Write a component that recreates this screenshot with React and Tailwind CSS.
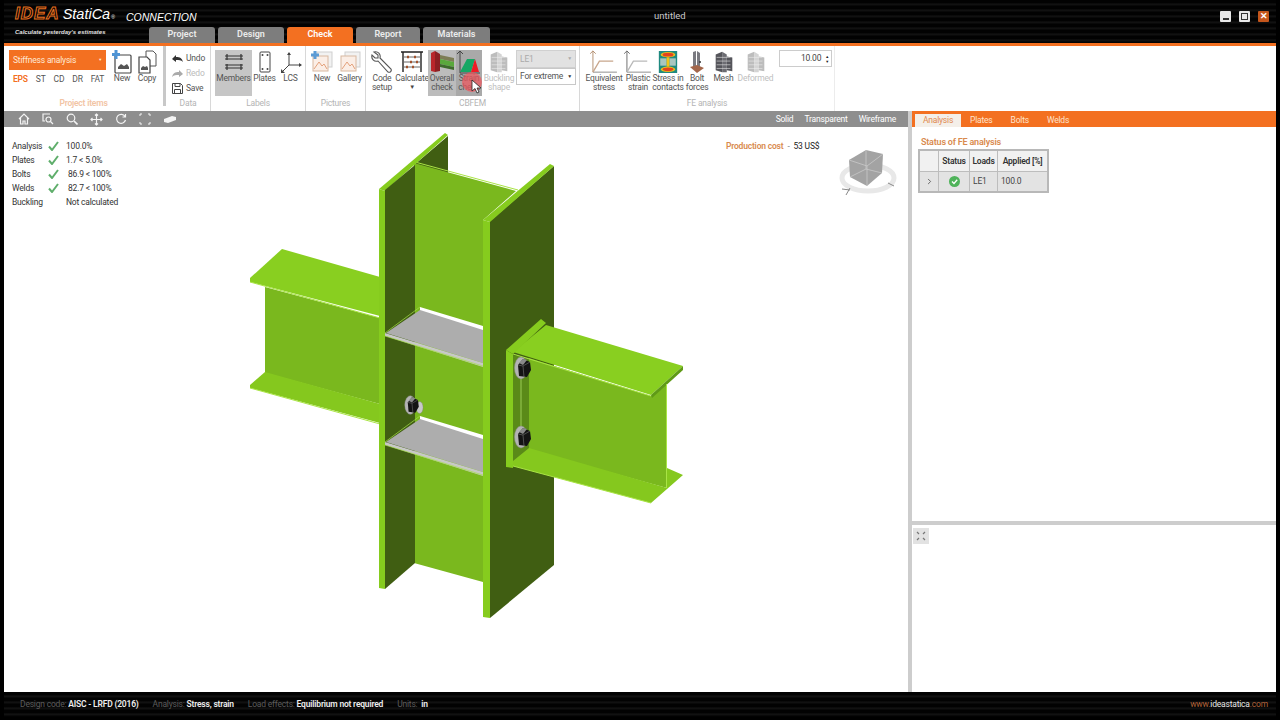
import React from 'react';
import { ChevronRight } from 'lucide-react';

const streaks = 'bg-[repeating-linear-gradient(180deg,#020202_0px,#020202_3px,#151515_4px,#050505_6px)]';

function Tab({ label, width, active }) {
  return (
    <div className={`h-[16px] rounded-t-[3px] flex items-center justify-center text-[9px] font-semibold ${width} ${active ? 'bg-[#f37021] text-white' : 'bg-[#7d7d7d] text-[#ececec]'}`}>
      {label}
    </div>
  );
}

function WindowButtons() {
  return (
    <div className="flex items-center gap-[8px] pr-[7px] pt-[1px]">
      <div className="w-[11px] h-[11px] rounded-[1px] bg-[#e8e8e8] flex items-end justify-center pb-[2px]">
        <div className="w-[6px] h-[2px] bg-[#333]" />
      </div>
      <div className="w-[11px] h-[11px] rounded-[1px] bg-[#e8e8e8] flex items-center justify-center">
        <div className="w-[7px] h-[7px] border border-[#333]" />
      </div>
      <div className="w-[11px] h-[11px] rounded-[1px] bg-[#c4561c] flex items-center justify-center text-[9px] leading-none font-bold text-white">✕</div>
    </div>
  );
}

function Header() {
  return (
    <div className={`h-[43px] shrink-0 flex tracking-normal font-['Liberation_Sans',sans-serif] ${streaks}`}>
      <div className="w-[145px] pl-[11px] pt-[5px] shrink-0">
        <div className="flex items-baseline leading-none whitespace-nowrap">
          <span className="italic font-bold text-[17px] tracking-[1px] text-transparent [-webkit-text-stroke:1px_#e8701f]">IDEA</span>
          <span className="italic text-[14.5px] text-white ml-[3px]">StatiCa</span>
          <span className="text-[5px] text-white ml-[1px]">®</span>
        </div>
        <div className="italic font-bold text-[6px] text-[#e0e0e0] mt-[6px] whitespace-nowrap">Calculate yesterday's estimates</div>
      </div>
      <div className="flex-1 relative">
        <div className="italic text-[10.5px] text-white absolute left-[-23px] top-[10px]">CONNECTION</div>
        <div className="absolute left-0 bottom-0 flex gap-[3px] font-['Roboto',sans-serif]">
          <Tab label="Project" width="w-[66px]" />
          <Tab label="Design" width="w-[66px]" />
          <Tab label="Check" width="w-[66px]" active />
          <Tab label="Report" width="w-[64px]" />
          <Tab label="Materials" width="w-[67px]" />
        </div>
      </div>
      <div className="w-[622px] shrink-0 flex items-start justify-between pt-[10px]">
        <div className="flex-1 flex items-center h-[12px]">
          <span className="text-[9.5px] text-[#c8c8c8] font-['Roboto',sans-serif]">untitled</span>
        </div>
        <WindowButtons />
      </div>
    </div>
  );
}

function RibbonBtn({ width, icon, lines, disabled, caret }) {
  return (
    <div className={`${width} h-[46px] flex flex-col items-center shrink-0`}>
      <div className="h-[24px] flex items-center justify-center">{icon}</div>
      <div className={`text-[8.5px] leading-[8.5px] text-center whitespace-nowrap ${disabled ? 'text-[#c0c0c0]' : 'text-[#555]'}`}>
        {lines.map(l => <div key={l}>{l}</div>)}
        {caret && <div className="text-[6px] text-[#444]">▼</div>}
      </div>
    </div>
  );
}

function Group({ width, label, labelColor, line, children }) {
  return (
    <div className={`${width} h-full flex flex-col shrink-0 ${line}`}>
      <div className="flex h-[50px] pt-[4px]">{children}</div>
      <div className={`text-[8.5px] leading-[12px] text-center mt-[1px] ${labelColor || 'text-[#b4b4b4]'}`}>{label}</div>
    </div>
  );
}

const PictureIcon = ({ plus }) => (
  <svg width="24" height="22" viewBox="0 0 24 22">
    <rect x="7" y="1" width="15" height="15" fill="#f2f2f2" stroke="#cfcfcf" />
    <rect x="3" y="5" width="15" height="15" fill="#fbeee6" stroke="#d8b8a0" />
    <path d="M4 18l5-7 3 4 2-2 3 5" fill="none" stroke="#e4a27c" />
    {plus && <path d="M5 0v8M1 4h8" stroke="#5b9bd5" strokeWidth="3" />}
  </svg>
);

const ColumnIcon = ({ color = '#d4d4d4', dark = '#bdbdbd' }) => (
  <svg width="22" height="24" viewBox="0 0 22 26">
    <path d="M2 5l7-3v22l-7-2z" fill={dark} />
    <path d="M9 2l5 3v19l-5 0z" fill={color} />
    <path d="M14 7l6 1v15l-6-1z" fill={dark} />
    <path d="M3 8h15M3 12h15M3 16h15M3 20h15" stroke="#eee" strokeWidth="0.6" />
  </svg>
);

const GraphIcon = ({ plastic }) => (
  <svg width="32" height="24" viewBox="0 0 32 26">
    <path d="M4 24V1M1 4l3-3 3 3" fill="none" stroke={plastic ? '#666' : '#b08a6a'} strokeWidth="1" />
    <path d="M4 24h26" stroke="#888" strokeWidth="1" />
    <path d="M4 24l7-12h15" fill="none" stroke={plastic ? '#b9b9b9' : '#c8a68c'} strokeWidth="1.4" />
  </svg>
);

function ProjectItems() {
  return (
    <Group width="w-[159px]" label="Project items" labelColor="text-[#f2c4a4] font-semibold">
      <div className="w-[105px] pl-[5px]">
        <div className="w-[97px] h-[20px] bg-[#f37021] flex items-center justify-between px-[4px] text-[8.5px] text-[#ffe9d6]">
          <span>Stiffness analysis</span>
          <span className="text-[4px]">▼</span>
        </div>
        <div className="flex text-[8.5px] text-[#555] mt-[3px] pl-[4px] gap-[8px]">
          <span className="text-[#f37021] font-semibold">EPS</span>
          <span>ST</span>
          <span>CD</span>
          <span>DR</span>
          <span>FAT</span>
        </div>
      </div>
      <RibbonBtn width="w-[26px]" lines={['New']} icon={
        <svg width="22" height="24" viewBox="0 0 22 24">
          <rect x="4" y="5" width="16" height="18" rx="1" fill="#fff" stroke="#444" strokeWidth="1.2" />
          <path d="M7 17l3-3 3 2 3-2 2 3v2H7z" fill="#555" />
          <path d="M5 0v9M1 4.500h8" stroke="#4f94d4" strokeWidth="3" />
        </svg>} />
      <RibbonBtn width="w-[24px]" lines={['Copy']} icon={
        <svg width="20" height="24" viewBox="0 0 20 24">
          <path d="M9 1h7l3 3v12H9z" fill="#fff" stroke="#555" />
          <path d="M2 7h8l3 3v13H2z" fill="#fff" stroke="#444" strokeWidth="1.2" />
          <path d="M4 18l2-2 2 1 2-1 1 2v2H4z" fill="#555" />
        </svg>} />
    </Group>
  );
}

function DataGroup() {
  const row = (label, glyph, cls) => (
    <div className={`flex items-center h-[15px] gap-[2px] text-[8.5px] ${cls}`}>
      <span className="w-[14px] flex justify-center">{glyph}</span>
      <span>{label}</span>
    </div>
  );
  return (
    <Group width="w-[45px]" label="Data" line="border-r border-[#d8d8d8]">
      <div className="pl-[4px] pt-[1px]">
        {row('Undo', <svg width="11" height="8" viewBox="0 0 11 8"><path d="M0 4l4-4v2c4 0 6 1 7 5-2-2-4-2-7-2v2z" fill="#333" /></svg>, 'text-[#555]')}
        {row('Redo', <svg width="11" height="8" viewBox="0 0 11 8"><path d="M11 4L7 0v2C3 2 1 3 0 7c2-2 4-2 7-2v2z" fill="#aaa" /></svg>, 'text-[#bbb]')}
        {row('Save', <svg width="11" height="11" viewBox="0 0 11 11"><path d="M.5.5h8l2 2v8H.5zM3 .5v3h5v-3M2.500 10.500v-4h6v4" fill="none" stroke="#444" /></svg>, 'text-[#555]')}
      </div>
    </Group>
  );
}

function LabelsGroup() {
  return (
    <Group width="w-[95px]" label="Labels" line="border-r border-[#d8d8d8]">
      <div className="ml-[4px] w-[37px] h-[46px] bg-[#c6c6c6]">
        <RibbonBtn width="w-[37px]" lines={['Members']} icon={
          <svg width="22" height="18" viewBox="0 0 22 18">
            <path d="M2 3h18M2 6h18M2 12h18M2 15h18" stroke="#333" strokeWidth="1.2" />
            <path d="M4 1v6M18 1v6M4 11v6M18 11v6" stroke="#333" strokeWidth="1.2" />
          </svg>} />
      </div>
      <RibbonBtn width="w-[25px]" lines={['Plates']} icon={
        <svg width="12" height="22" viewBox="0 0 12 22">
          <rect x="1" y="1" width="10" height="20" rx="1" fill="#fff" stroke="#444" />
          <circle cx="3.500" cy="4" r="1" fill="#444" /><circle cx="8.500" cy="4" r="1" fill="#444" />
          <circle cx="3.500" cy="18" r="1" fill="#444" /><circle cx="8.500" cy="18" r="1" fill="#444" />
        </svg>} />
      <RibbonBtn width="w-[27px]" lines={['LCS']} icon={
        <svg width="22" height="22" viewBox="0 0 22 22">
          <path d="M9 14V2M9 14h12M9 14l-7 7" stroke="#444" fill="none" />
          <path d="M7 4l2-3 2 3zM19 12l3 2-3 2zM1 18l0 4 4 0z" fill="#444" />
        </svg>} />
    </Group>
  );
}

function PicturesGroup() {
  return (
    <Group width="w-[60px]" label="Pictures" line="border-r border-[#d8d8d8]">
      <div className="w-[1px]" />
      <RibbonBtn width="w-[30px]" lines={['New']} icon={<PictureIcon plus />} />
      <RibbonBtn width="w-[25px]" lines={['Gallery']} icon={<PictureIcon />} />
    </Group>
  );
}

function CbfemGroup() {
  return (
    <Group width="w-[214px]" label="CBFEM" line="border-r border-[#d8d8d8]">
      <div className="w-[2px]" />
      <RibbonBtn width="w-[28px]" lines={['Code', 'setup']} icon={
        <svg width="22" height="24" viewBox="0 0 22 24">
          <path d="M3 2l4 3 0 3-3 0-3-3c-1 4 2 7 6 6l10 11c2 1 4-1 3-3L9 8c1-4-2-7-6-6z" fill="#fff" stroke="#555" strokeWidth="1.1" />
        </svg>} />
      <RibbonBtn width="w-[32px]" lines={['Calculate']} caret icon={
        <svg width="22" height="22" viewBox="0 0 22 22">
          <path d="M2 1v20M20 1v20M0 1h22" stroke="#222" strokeWidth="1.4" fill="none" />
          <path d="M2 6h18M2 11h18M2 16h18" stroke="#666" />
          <path d="M6 6h2M13 6h2M9 11h2M15 11h2M5 16h2M11 16h2" stroke="#a0522d" strokeWidth="2.500" />
        </svg>} />
      <div className="w-[28px] h-[46px] bg-[#bcbcbc]">
        <RibbonBtn width="w-[28px]" lines={['Overall', 'check']} icon={
          <svg width="26" height="24" viewBox="0 0 26 24">
            <path d="M2 3l4-2v21l-4-1z" fill="#b9262a" />
            <path d="M6 1l5 3v17l-5 1z" fill="#8c1f22" />
            <path d="M11 5l14 3v4l-14-3z" fill="#7d7d55" />
            <path d="M11 9l14 3v5l-14-3z" fill="#5aa83c" />
            <path d="M11 14l14 3v3l-14-3z" fill="#3e6b2c" />
          </svg>} />
      </div>
      <div className="w-[26px] h-[46px] bg-[#a9a9a9] relative">
        <RibbonBtn width="w-[26px]" lines={['Strain', 'check']} icon={
          <svg width="24" height="24" viewBox="0 0 24 24">
            <path d="M3 23V1M0 4l3-3 3 3M3 23h20" fill="none" stroke="#444" />
            <path d="M3 22l7-13h8l-4 13z" fill="#16a765" />
            <path d="M14 22l4-13 4 13z" fill="#ee1c25" />
          </svg>} />
        <div className="absolute left-[6px] top-[22px] w-[20px] h-[20px] rounded-full bg-[#f2545b]/70" />
        <svg className="absolute left-[15px] top-[29px]" width="11" height="15" viewBox="0 0 11 15">
          <path d="M1 1v11l3-2.500 2 4.500 2-1-2-4h4z" fill="#fff" stroke="#222" strokeWidth="0.8" />
        </svg>
      </div>
      <RibbonBtn width="w-[34px]" lines={['Buckling', 'shape']} disabled icon={<ColumnIcon />} />
      <div className="w-[60px] text-[8.5px] whitespace-nowrap">
        <div className="h-[18px] bg-[#e2e2e2] border border-[#d0d0d0] flex items-center justify-between px-[3px] text-[#aaa]">
          <span>LE1</span><span className="text-[5px]">▼</span>
        </div>
        <div className="h-[17px] bg-white border border-[#c8c8c8] flex items-center justify-between px-[3px] text-[#555]">
          <span>For extreme</span><span className="text-[5px] text-[#333]">▼</span>
        </div>
      </div>
    </Group>
  );
}

function FeGroup() {
  return (
    <Group width="w-[255px]" label="FE analysis" line="border-r border-[#ececec]">
      <div className="w-[6px]" />
      <RibbonBtn width="w-[36px]" lines={['Equivalent', 'stress']} icon={<GraphIcon />} />
      <RibbonBtn width="w-[32px]" lines={['Plastic', 'strain']} icon={<GraphIcon plastic />} />
      <RibbonBtn width="w-[28px]" lines={['Stress in', 'contacts']} icon={
        <svg width="20" height="22" viewBox="0 0 20 24">
          <rect width="20" height="24" fill="#1f8a80" />
          <rect x="1.500" y="8" width="7" height="8" fill="#a9c6c0" />
          <rect x="11.500" y="8" width="7" height="8" fill="#a9c6c0" />
          <ellipse cx="10" cy="4" rx="8" ry="3" fill="#f0c419" />
          <ellipse cx="10" cy="4" rx="6" ry="2" fill="#e3431f" />
          <ellipse cx="10" cy="20" rx="8" ry="3" fill="#f0c419" />
          <ellipse cx="10" cy="20" rx="6" ry="2" fill="#e3431f" />
          <rect x="8.500" y="7" width="3" height="10" fill="#f0c419" />
        </svg>} />
      <RibbonBtn width="w-[30px]" lines={['Bolt', 'forces']} icon={
        <svg width="16" height="24" viewBox="0 0 16 24">
          <path d="M4 2l3-1v16H4zM8 1l3 2v14H8z" fill="#7a7a80" />
          <path d="M1 17l7-2 7 3-7 5z" fill="#a3664a" />
          <circle cx="11" cy="12" r="1" fill="#333" />
        </svg>} />
      <RibbonBtn width="w-[23px]" lines={['Mesh']} icon={<ColumnIcon color="#6c6c72" dark="#55555b" />} />
      <RibbonBtn width="w-[41px]" lines={['Deformed']} disabled icon={<ColumnIcon />} />
      <div className="ml-[3px] w-[53px] h-[17px] bg-white border border-[#ccc] flex items-center justify-end text-[8.5px] text-[#444] pr-[2px] gap-[4px]">
        <span>10.00</span>
        <span className="text-[4px] leading-[5px] text-[#222]">▲<br />▼</span>
      </div>
    </Group>
  );
}

function Ribbon() {
  return (
    <div className="h-[65px] shrink-0 bg-white flex">
      <ProjectItems />
      <div className="w-[3px] h-[60px] bg-[#c8c8c8] shrink-0" />
      <DataGroup />
      <LabelsGroup />
      <PicturesGroup />
      <CbfemGroup />
      <FeGroup />
    </div>
  );
}

function Toolbar() {
  const stroke = { fill: 'none', stroke: '#f4f4f4', strokeWidth: 1.2 };
  return (
    <div className="h-[16px] shrink-0 bg-[#8e8e8e] flex items-center justify-between">
      <div className="flex items-center pl-[14px] gap-[12px]">
        <svg width="12" height="12" viewBox="0 0 12 12"><path d="M1 6l5-5 5 5M2.500 5v6h2.500V8h2v3h2.500V5" {...stroke} /></svg>
        <svg width="12" height="12" viewBox="0 0 12 12"><path d="M8 1H1v7h2" {...stroke} /><circle cx="6.500" cy="6.500" r="2.500" {...stroke} /><path d="M8.500 8.500l2.500 2.500" {...stroke} /></svg>
        <svg width="12" height="12" viewBox="0 0 12 12"><circle cx="5" cy="5" r="3.800" {...stroke} /><path d="M8 8l3.500 3.500" {...stroke} strokeWidth="1.6" /></svg>
        <svg width="13" height="13" viewBox="0 0 13 13"><path d="M6.500 1v11M1 6.500h11M5 2.500L6.500 1 8 2.500M5 10.500L6.500 12 8 10.500M2.500 5L1 6.500 2.500 8M10.500 5L12 6.500 10.500 8" {...stroke} /></svg>
        <svg width="12" height="12" viewBox="0 0 12 12"><path d="M10 3.500A4.500 4.500 0 1 0 10.500 7M10.500 1v3h-3" {...stroke} /></svg>
        <svg width="12" height="12" viewBox="0 0 12 12"><path d="M1 3V1h2M9 1h2v2M11 9v2H9M3 11H1V9" {...stroke} strokeWidth="1" /></svg>
        <svg width="14" height="9" viewBox="0 0 14 9"><path d="M1 4l8-3 4 1v3L5 8 1 7z" fill="#f4f4f4" /></svg>
      </div>
      <div className="flex text-[8.5px] text-white pr-[12px] gap-[11px]">
        <span>Solid</span>
        <span>Transparent</span>
        <span>Wireframe</span>
      </div>
    </div>
  );
}

function Bolt({ x, y, washer }) {
  return (
    <g transform={`translate(${x} ${y})`}>
      {washer && <ellipse cx="9" cy="3" rx="4" ry="7" fill="#c8c8c8" stroke="#7a7a7a" strokeWidth="0.4" />}
      <ellipse cx="-2" cy="0" rx="6.500" ry="11" fill="#b4b4b4" stroke="#8a8a8a" strokeWidth="0.5" />
      <polygon points="0,-9 7,-6 8,2 4,9 -4,8 -5,-3" fill="#141414" />
      <polygon points="-4,-5 0,-9 4,-8 0,-3" fill="#8a8a8a" />
      <path d="M-5-3L0-2 1 9M0-2L7-6" stroke="#777" strokeWidth="0.6" fill="none" />
    </g>
  );
}

function Stiffener({ dy }) {
  return (
    <g transform={`translate(0 ${dy})`}>
      <polygon points="420,307 483,326 483,332 420,312" fill="#ffffff" />
      <polygon points="386,333 420,310 483,330 483,363" fill="#adadad" />
      <polygon points="385,333 483,363 483,367 385,336" fill="#c8c8c8" />
      <path d="M385 336L486 367M385 333L420 307" stroke="#a6e04a" strokeWidth="0.7" fill="none" />
    </g>
  );
}

// drawn in page coordinates, the viewBox starts where the canvas starts
function Connection() {
  return (
    <svg className="absolute left-0 top-0" width="904" height="565" viewBox="4 127 904 565">
      {/* left beam */}
      <polygon points="265,287 380,318 380,404 265,373" fill="#7ab81e" />
      <polygon points="250,278 282,249 380,277 380,316 250,282" fill="#89cf20" />
      <path d="M250 282L380 318" stroke="#a9e445" strokeWidth="1" />
      <polygon points="250,385 265,372 380,404 380,423 250,388" fill="#85c81e" />
      <path d="M250 388L380 424" stroke="#a9e445" strokeWidth="1" />

      {/* column, back flange and web */}
      <polygon points="414,165 448,136 448,175" fill="#405e12" />
      <polygon points="414,163 516,191 483,220 483,582 414,563" fill="#7ab81e" />
      <path d="M415 162L518 190" stroke="#a9e445" strokeWidth="1" />
      <polygon points="379,189 445,133 448,135 385,191" fill="#86cc1e" />
      <polygon points="385,190 415,165 415,563 385,589" fill="#405e12" />
      <polygon points="379,189 385,191 385,589 379,588" fill="#86cc1e" />

      <Stiffener dy={0} />
      <Stiffener dy={109} />
      <g transform="translate(412 405) scale(0.85)"><Bolt x={0} y={0} washer /></g>

      {/* column, front flange */}
      <polygon points="490,221 554,166 554,565 490,618" fill="#405e12" />
      <polygon points="483,220 550,164 554,166 490,222" fill="#86cc1e" />
      <polygon points="483,220 490,222 490,618 483,617" fill="#86cc1e" />

      {/* right beam */}
      <polygon points="529,358 651,396 667,382 667,488 529,450" fill="#7ab81e" />
      <polygon points="513,355 529,358 529,450 513,463" fill="#5a8a18" />
      <polygon points="513,352 546,325 683,366 651,395" fill="#89cf20" />
      <polygon points="651,395 683,366 683,370 652,398" fill="#5f9a16" />
      <path d="M513 354L651 396" stroke="#a9e445" strokeWidth="1" />
      <polygon points="513,461 529,448 667,488 667,468 683,475 651,503 513,466" fill="#85c81e" />
      <path d="M513 466L651 503" stroke="#a9e445" strokeWidth="1" />
      <polygon points="506,350 541,319 546,323 513,354" fill="#86cc1e" />
      <polygon points="506,350 513,354 513,468 506,467" fill="#86cc1e" />
      <path d="M666.500 384V488" stroke="#a9e445" strokeWidth="1" />
      <path d="M521 376V430" stroke="#b8e870" strokeWidth="0.7" />
      <Bolt x={523} y={368} />
      <Bolt x={523} y={437} />
    </svg>
  );
}

function ViewCube() {
  return (
    <svg className="absolute left-[834px] top-[20px]" width="60" height="52" viewBox="0 0 60 52">
      <ellipse cx="30" cy="31" rx="26" ry="13" fill="none" stroke="#e8e8e8" strokeWidth="5" />
      <polygon points="11,13 28,3 45,7 44,26 29,39 12,30" fill="#a3a3a3" />
      <path d="M11 13L29 19 45 7M29 19V39M28 3V22M12 30L28 22 44 26" stroke="#cfcfcf" strokeWidth="0.7" fill="none" />
      <path d="M8 48l4-7M4 42l8 1M50 36l6 3" stroke="#888" strokeWidth="1" />
    </svg>
  );
}

function StatusList() {
  const rows = [
    ['Analysis', true, '100.0%', ''],
    ['Plates', true, '1.7 < 5.0%', ''],
    ['Bolts', true, '86.9 < 100%', 'pl-[2px]'],
    ['Welds', true, '82.7 < 100%', 'pl-[2px]'],
    ['Buckling', false, 'Not calculated', ''],
  ];
  return (
    <div className="absolute left-[8px] top-[12px] text-[8.5px] text-[#333]">
      {rows.map(([name, ok, value, cls]) => (
        <div key={name} className="flex items-center h-[14px]">
          <span className="w-[34px]">{name}</span>
          <span className="w-[14px] flex justify-center mr-[6px]">
            {ok && <svg width="11" height="10" viewBox="0 0 11 10"><path d="M1 5.500L4 9l6-8" fill="none" stroke="#5fae6b" strokeWidth="2" /></svg>}
          </span>
          <span className={cls}>{value}</span>
        </div>
      ))}
    </div>
  );
}

function Canvas() {
  return (
    <div className="relative flex-1 bg-white overflow-hidden">
      <Connection />
      <StatusList />
      <div className="absolute left-[722px] top-[13px] text-[8.5px] flex gap-[4px] whitespace-nowrap">
        <span className="text-[#d98a4e] font-semibold">Production cost</span>
        <span className="text-[#888]">-</span>
        <span className="text-[#222]">53 US$</span>
      </div>
      <ViewCube />
    </div>
  );
}

function ResultsTable() {
  const th = 'border-r border-[#bdbdbd] flex items-center justify-center';
  return (
    <div className="w-[131px] ml-[2px] mt-[1px] border-2 border-[#b8b8b8] text-[8.5px] text-[#444]">
      <div className="flex h-[21px] bg-[#f1f1f1] font-semibold text-[#333] border-b border-[#bdbdbd]">
        <div className={`${th} w-[19px]`} />
        <div className={`${th} w-[31px]`}>Status</div>
        <div className={`${th} w-[28px]`}>Loads</div>
        <div className="flex-1 flex items-center justify-center">Applied [%]</div>
      </div>
      <div className="flex h-[19px] bg-[#e3e3e3]">
        <div className={`${th} w-[19px]`}><ChevronRight size={9} strokeWidth={2} color="#444" /></div>
        <div className={`${th} w-[31px]`}>
          <svg width="11" height="11" viewBox="0 0 11 11">
            <circle cx="5.500" cy="5.500" r="5.500" fill="#4fb35a" />
            <path d="M3 5.500L5 7.500 8.200 3.800" fill="none" stroke="#fff" strokeWidth="1.3" />
          </svg>
        </div>
        <div className={`${th} w-[28px] justify-start pl-[3px]`}>LE1</div>
        <div className="flex-1 flex items-center pl-[3px]">100.0</div>
      </div>
    </div>
  );
}

function RightPanel() {
  return (
    <div className="flex-1 flex flex-col bg-white">
      <div className="h-[16px] bg-[#f37021] flex items-end pl-[3px] text-[8.5px] text-[#ffe3cc] shrink-0">
        <div className="w-[46px] h-[13px] bg-[#f4efe9] text-[#e08a50] flex items-center justify-center">Analysis</div>
        <div className="flex h-[14px] items-center pl-[9px] gap-[18px]">
          <span>Plates</span>
          <span>Bolts</span>
          <span>Welds</span>
        </div>
      </div>
      <div className="h-[394px] shrink-0 pt-[10px] pl-[4px]">
        <div className="pl-[5px] text-[9px] leading-[11px] font-semibold text-[#d98a4e]">Status of FE analysis</div>
        <ResultsTable />
      </div>
      <div className="h-[4px] bg-[#cdcdcd] shrink-0" />
      <div className="flex-1 pt-[3px] pl-[1px]">
        <div className="w-[16px] h-[16px] bg-[#e2e2e2] flex items-center justify-center">
          <svg width="10" height="10" viewBox="0 0 10 10"><path d="M1 1l2 2M9 1L7 3M1 9l2-2M9 9L7 7" stroke="#777" strokeWidth="1.2" /></svg>
        </div>
      </div>
    </div>
  );
}

function Footer() {
  const dim = 'text-[#5c5c5c]';
  const val = 'text-[#eeeeee] font-semibold';
  return (
    <div className={`h-[25px] shrink-0 flex items-center justify-between pl-[16px] pr-[8px] text-[8.5px] ${streaks}`}>
      <div className="flex whitespace-nowrap">
        <span className={dim}>Design code:&nbsp;</span><span className={`${val} mr-[14px]`}>AISC - LRFD (2016)</span>
        <span className={dim}>Analysis:&nbsp;</span><span className={`${val} mr-[14px]`}>Stress, strain</span>
        <span className={dim}>Load effects:&nbsp;</span><span className={`${val} mr-[14px]`}>Equilibrium not required</span>
        <span className={dim}>Units:&nbsp;&nbsp;</span><span className={val}>in</span>
      </div>
      <div className="whitespace-nowrap">
        <span className="text-[#b0623a]">www.</span><span className="text-[#e8e8e8]">ideastatica</span><span className="text-[#b0623a]">.com</span>
      </div>
    </div>
  );
}

export default function App() {
  return (
    <div className="w-[1280px] h-[720px] bg-black overflow-hidden px-[4px] pb-[3px] flex flex-col tracking-[-0.2px] font-['Roboto',sans-serif]">
      <Header />
      <div className="h-[3px] bg-[#f37021] shrink-0" />
      <Ribbon />
      <div className="flex-1 flex min-h-0">
        <div className="w-[904px] flex flex-col shrink-0">
          <Toolbar />
          <Canvas />
        </div>
        <div className="w-[4px] bg-[#cdcdcd] shrink-0" />
        <RightPanel />
      </div>
      <Footer />
    </div>
  );
}
